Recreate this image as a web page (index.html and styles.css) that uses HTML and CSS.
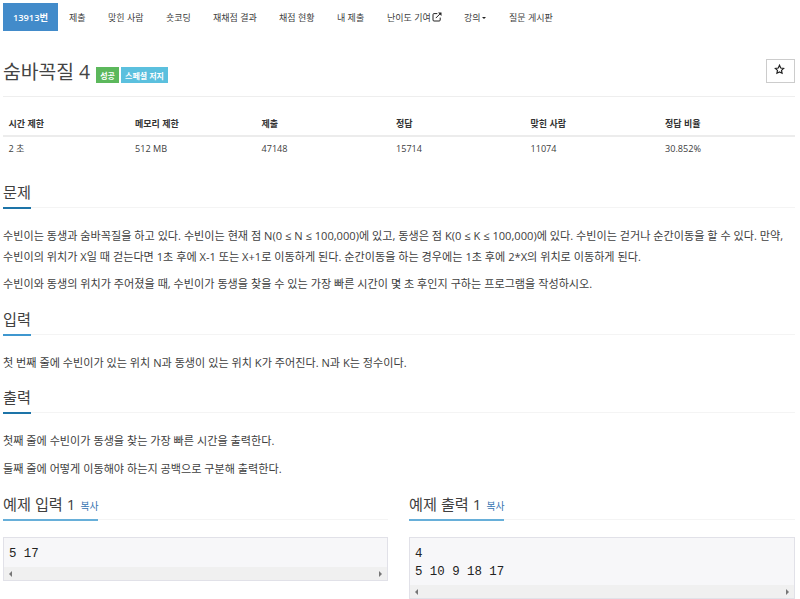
FILE: index.html
```html
<!DOCTYPE html>
<html lang="ko">
<head>
<meta charset="utf-8">
<title>13913번: 숨바꼭질 4</title>
<link rel="stylesheet" href="styles.css">
</head>
<body>
<nav class="menu">
<a class="active">13913번</a><a>제출</a><a>맞힌 사람</a><a>숏코딩</a><a>재채점 결과</a><a>채점 현황</a><a>내 제출</a><a>난이도 기여<svg class="ext" viewBox="0 0 10 10"><path d="M5.3 1.6H2Q1 1.6 1 2.6V8Q1 9 2 9H7.2Q8.2 9 8.2 8V5.6M3.8 6.1L8.2 1.7" fill="none" stroke="currentColor" stroke-width="1"/><path d="M6 .5H9.5V4Z" fill="currentColor"/></svg></a><a>강의<i class="caret"></i></a><a>질문 게시판</a>
</nav>
<header class="title">
<h1>숨바꼭질 4</h1>
<span class="label success">성공</span><span class="label special">스페셜 저지</span>
<button class="star" aria-label="즐겨찾기"><svg viewBox="0 0 12 12"><path d="M6 1.4L7.35 4.35L10.5 4.75L8.2 6.95L8.8 10.1L6 8.6L3.2 10.1L3.8 6.95L1.5 4.75L4.65 4.35Z" fill="none" stroke="currentColor" stroke-width="1.3"/></svg></button>
</header>
<table class="info">
<thead><tr><th>시간 제한</th><th>메모리 제한</th><th>제출</th><th>정답</th><th>맞힌 사람</th><th>정답 비율</th></tr></thead>
<tbody><tr><td>2 초</td><td>512 MB</td><td>47148</td><td>15714</td><td>11074</td><td>30.852%</td></tr></tbody>
</table>
<section class="problem">
<div class="headline dark"><h2>문제</h2></div>
<p>수빈이는 동생과 숨바꼭질을 하고 있다. 수빈이는 현재 점 N(0 ≤ N ≤ 100,000)에 있고, 동생은 점 K(0 ≤ K ≤ 100,000)에 있다. 수빈이는 걷거나 순간이동을 할 수 있다. 만약,<br>수빈이의 위치가 X일 때 걷는다면 1초 후에 X-1 또는 X+1로 이동하게 된다. 순간이동을 하는 경우에는 1초 후에 2*X의 위치로 이동하게 된다.</p>
<p>수빈이와 동생의 위치가 주어졌을 때, 수빈이가 동생을 찾을 수 있는 가장 빠른 시간이 몇 초 후인지 구하는 프로그램을 작성하시오.</p>
</section>
<section class="input">
<div class="headline"><h2>입력</h2></div>
<p>첫 번째 줄에 수빈이가 있는 위치 N과 동생이 있는 위치 K가 주어진다. N과 K는 정수이다.</p>
</section>
<section class="output">
<div class="headline dark"><h2>출력</h2></div>
<p>첫째 줄에 수빈이가 동생을 찾는 가장 빠른 시간을 출력한다.</p>
<p>둘째 줄에 어떻게 이동해야 하는지 공백으로 구분해 출력한다.</p>
</section>
<div class="samples">
<section>
<div class="headline light"><h2>예제 입력 1 <a>복사</a></h2></div>
<div class="sample"><pre>5 17</pre><div class="scroll"><i class="left"></i><i class="right"></i></div></div>
</section>
<section>
<div class="headline light"><h2>예제 출력 1 <a>복사</a></h2></div>
<div class="sample"><pre>4
5 10 9 18 17</pre><div class="scroll"><i class="left"></i><i class="right"></i></div></div>
</section>
</div>
</body>
</html>
```
FILE: styles.css
```css
* { box-sizing: border-box; }
body {
  margin: 0;
  padding: 3px 5px 0 3px;
  height: 599px;
  overflow: hidden;
  background: #fff;
  color: #404040;
  font-family: "Open Sans", "Noto Sans CJK KR", sans-serif;
  font-size: 11.11px;
}
h1, h2, p, pre { margin: 0; font-weight: 400; }
.menu {
  display: grid;
  grid-template-columns: 55px 39px 58px 47px 66px 58px 50px 77px 45px 70px;
  grid-template-rows: 28px;
  height: 28px;
  line-height: 30px;
  font-size: 9px;
  white-space: nowrap;
}
.menu a { height: 28px; padding-left: 11px; }
.menu .active { padding: 0; text-align: center; background: #428bca; color: #fff; font-size: 9.3px; font-weight: 600; }
.ext { width: 10px; height: 10px; margin-left: 1px; vertical-align: -1px; color: #222; }
.caret { display: inline-block; margin-left: 1px; vertical-align: 2px; border: 2.5px solid transparent; border-top-color: #222; border-bottom: 0; }
.title {
  display: flex;
  height: 66px;
  align-items: flex-start;
  border-bottom: 1px solid #eee;
  white-space: nowrap;
}
.title h1 { width: 93px; margin-top: 26px; font-size: 19.3px; line-height: 30px; color: #444; }
.label { height: 16px; margin-top: 36px; line-height: 17px; color: #fff; font-size: 8px; font-weight: 700; text-align: center; }
.success { width: 23px; margin-right: 2px; background: #5cb85c; }
.special { width: 47px; background: #5bc0de; }
.star { width: 29px; height: 24px; margin: 28px 0 0 auto; padding: 0 2px 4px 0; display: flex; align-items: center; justify-content: center; background: #fff; border: 1px solid #ccc; color: #222; }
.star svg { width: 11px; height: 11px; }
.info { width: 100%; margin-top: 15px; table-layout: fixed; border-collapse: collapse; font-size: 9.1px; }
.info th, .info td { padding: 0 0 0 5.5px; height: 24px; text-align: left; line-height: 12px; }
.info th { border-bottom: 2px solid #ececec; font-size: 9px; font-weight: 700; color: #333; }
.info th:nth-child(-n+2) { width: 126.5px; }
.info th:nth-child(n+3):nth-child(-n+5) { width: 134.5px; }
.headline { height: 30px; border-bottom: 1px solid #f4f4f4; }
.headline h2 { display: inline-block; height: 31px; border-bottom: 2px solid #3f97cf; font-size: 15.2px; line-height: 28px; white-space: nowrap; }
.headline.dark h2 { border-color: #1d74a8; }
.headline.light h2 { border-color: #67afd9; }
.headline a { margin-left: 1px; font-size: 9.8px; color: #3573b1; }
section p { line-height: 20px; white-space: nowrap; }
.problem { height: 127px; margin-top: 18px; }
.problem p { line-height: 20.5px; }
.problem .headline + p { margin-top: 18px; }
.problem p + p { margin-top: 7px; }
.input { height: 78px; }
.input .headline + p, .output .headline + p { margin-top: 18px; }
.output { height: 107px; }
.output p + p { margin-top: 8px; }
.samples { display: grid; grid-template-columns: 385px 386px; gap: 21px; align-items: start; }
.sample { margin-top: 17px; border: 1px solid #e1e1e8; background: #f7f7f9; }
.sample pre { padding: 7px 6px 4px 5px; font: 12.4px/18px "Liberation Mono", monospace; color: #222; }
.scroll { display: flex; justify-content: space-between; align-items: center; height: 13px; padding: 0 5px; background: #f0f0f0; }
.scroll i { width: 0; height: 0; border: 3px solid transparent; }
.scroll .left { border-left: 0; border-right-color: #777; }
.scroll .right { border-right: 0; border-left-color: #777; }
```
